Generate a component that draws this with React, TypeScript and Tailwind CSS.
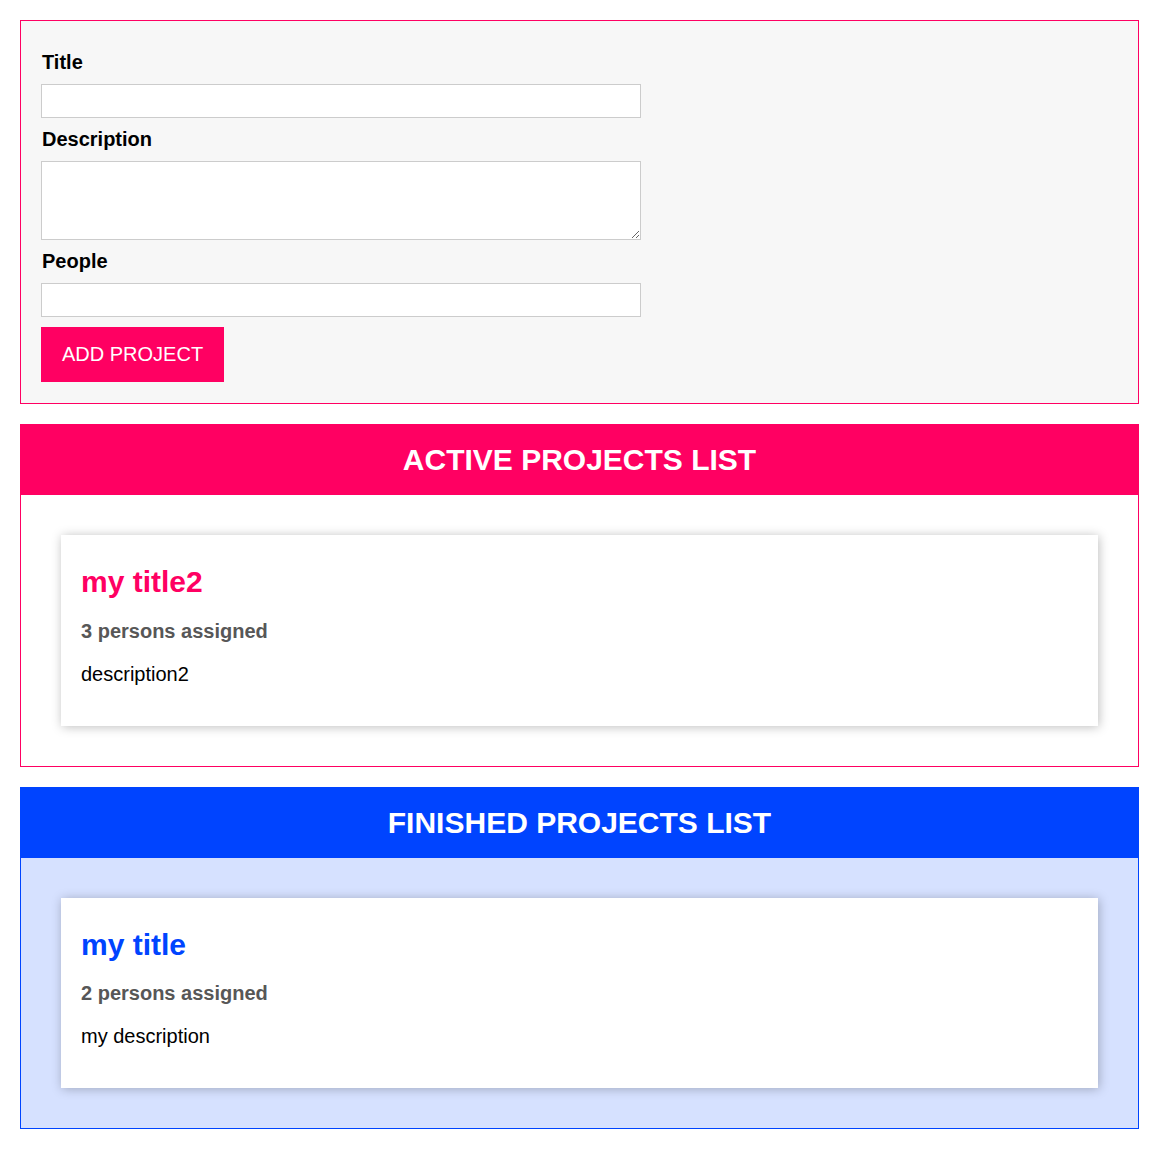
const font = "font-['Liberation_Sans',Arial,sans-serif]"

type Project = { id: string; title: string; people: number; description: string }

const active: Project[] = [{ id: 'p2', title: 'my title2', people: 3, description: 'description2' }]
const finished: Project[] = [{ id: 'p1', title: 'my title', people: 2, description: 'my description' }]

function ProjectForm() {
  return (
    <form className="m-[20px] px-[20px] pt-[20px] pb-[21px] border border-[#ff0062] bg-[#f7f7f7]" onSubmit={(e) => e.preventDefault()}>
      <label htmlFor="title" className="block my-[10px] pl-px font-bold">Title</label>
      <input id="title" type="text" className="block my-[10px] w-full max-w-[600px] h-[34px] px-[8px] py-[4px] border border-[#ccc] bg-white" />
      <label htmlFor="description" className="block my-[10px] pl-px font-bold">Description</label>
      <textarea id="description" rows={3} className="block my-[10px] w-full max-w-[600px] px-[8px] py-[4px] border border-[#ccc] bg-white" />
      <label htmlFor="people" className="block my-[10px] pl-px font-bold">People</label>
      <input id="people" type="number" className="block my-[10px] w-full max-w-[600px] h-[34px] px-[8px] py-[4px] border border-[#ccc] bg-white" />
      <button type="submit" className="bg-[#ff0062] border border-[#ff0062] text-white px-[20px] py-[15px] cursor-pointer">
        ADD PROJECT
      </button>
    </form>
  )
}

function ProjectList({ kind, projects }: { kind: 'active' | 'finished'; projects: Project[] }) {
  const isFinished = kind === 'finished'
  return (
    <section className={'m-[20px] border ' + (isFinished ? 'border-[#0044ff]' : 'border-[#ff0062]')}>
      <header className={'h-[70px] flex items-center justify-center ' + (isFinished ? 'bg-[#0044ff]' : 'bg-[#ff0062]')}>
        <h2 className="m-0 text-white text-[30px] font-bold">
          {isFinished ? 'FINISHED PROJECTS LIST' : 'ACTIVE PROJECTS LIST'}
        </h2>
      </header>
      <ul className={'list-none m-0 p-[20px] ' + (isFinished ? 'bg-[#d6e1ff]' : 'bg-white')}>
        {projects.map((p) => (
          <li key={p.id} className="m-[20px] p-[20px] bg-white shadow-[1px_1px_10px_rgba(0,0,0,0.26)]">
            <h2 className={'my-[10px] text-[30px] leading-[34.5px] font-bold ' + (isFinished ? 'text-[#0044ff]' : 'text-[#ff0062]')}>{p.title}</h2>
            <h3 className="my-[20px] text-[20px] font-bold text-[#575757]">{p.people} persons assigned</h3>
            <p className="my-[20px]">{p.description}</p>
          </li>
        ))}
      </ul>
    </section>
  )
}

export default function App() {
  return (
    <div className={`${font} text-[20px] leading-[normal] text-black bg-white min-h-[1150px] flow-root`}>
      <ProjectForm />
      <ProjectList kind="active" projects={active} />
      <ProjectList kind="finished" projects={finished} />
    </div>
  )
}
